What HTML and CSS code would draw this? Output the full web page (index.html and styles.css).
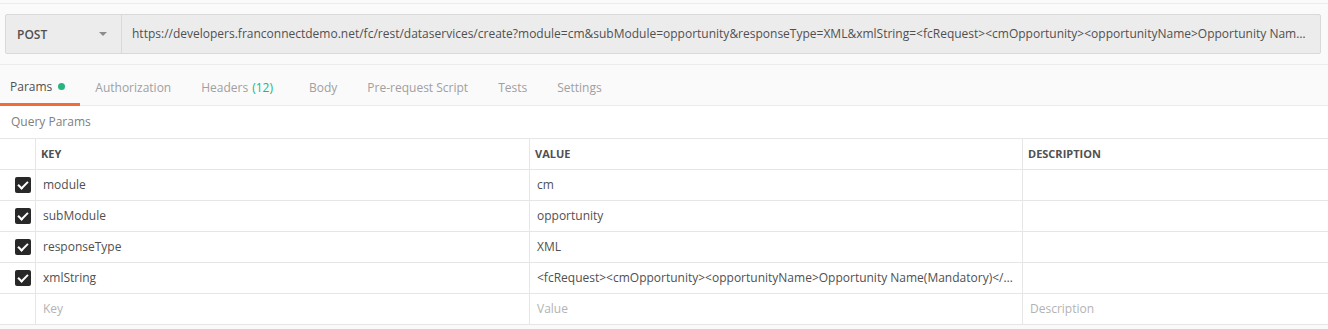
FILE: index.html
```html
<!DOCTYPE html>
<html lang="en">
<head>
  <meta charset="UTF-8" />
  <title>Request | Params</title>
  <meta name="viewport" content="width=device-width, initial-scale=1.0" />
  <link rel="stylesheet" href="styles.css">
</head>
<body>
  <!-- Barra de la petición -->
  <div class="request-bar">
    <div class="request-box">
      <div class="method">
        <span>POST</span>
        <span class="caret"></span>
      </div>
      <div class="url">https://developers.franconnectdemo.net/fc/rest/dataservices/create?module=cm&amp;subModule=opportunity&amp;responseType=XML&amp;xmlString=&lt;fcRequest&gt;&lt;cmOpportunity&gt;&lt;opportunityName&gt;Opportunity Name(Mandatory)&lt;/opportunityName&gt;&lt;/cmOpportunity&gt;&lt;/fcRequest&gt;</div>
    </div>
  </div>

  <!-- Pestañas -->
  <nav class="tabs">
    <a class="tab active">Params <span class="dot"></span></a>
    <a class="tab">Authorization</a>
    <a class="tab">Headers <span class="count">(12)</span></a>
    <a class="tab tab-body">Body</a>
    <a class="tab">Pre-request Script</a>
    <a class="tab">Tests</a>
    <a class="tab">Settings</a>
  </nav>

  <div class="params">
    <div class="params-title">Query Params</div>
    <div class="grid">
      <div class="row head">
        <div class="cell check"></div>
        <div class="cell key">KEY</div>
        <div class="cell value">VALUE</div>
        <div class="cell desc">DESCRIPTION</div>
      </div>
      <div class="row">
        <div class="cell check"><span class="box"></span></div>
        <div class="cell key">module</div>
        <div class="cell value">cm</div>
        <div class="cell desc"></div>
      </div>
      <div class="row">
        <div class="cell check"><span class="box"></span></div>
        <div class="cell key">subModule</div>
        <div class="cell value">opportunity</div>
        <div class="cell desc"></div>
      </div>
      <div class="row">
        <div class="cell check"><span class="box"></span></div>
        <div class="cell key">responseType</div>
        <div class="cell value">XML</div>
        <div class="cell desc"></div>
      </div>
      <div class="row">
        <div class="cell check"><span class="box"></span></div>
        <div class="cell key">xmlString</div>
        <div class="cell value">&lt;fcRequest&gt;&lt;cmOpportunity&gt;&lt;opportunityName&gt;Opportunity Name(Mandatory)&lt;/opportunityName&gt;</div>
        <div class="cell desc"></div>
      </div>
      <div class="row empty">
        <div class="cell check"></div>
        <div class="cell key">Key</div>
        <div class="cell value">Value</div>
        <div class="cell desc">Description</div>
      </div>
    </div>
  </div>
</body>
</html>
```

FILE: styles.css
```css
body {
  margin: 0;
  font-family: 'Open Sans', sans-serif;
  font-size: 12px;
  background: #fafafa;
  color: #505050;
}

.request-bar {
  margin-top: 3px;
  border-top: 1px solid #ececec;
  border-bottom: 1px solid #ececec;
  padding: 10px 7px 10px 5px;
}

.request-box {
  display: flex;
  height: 40px;
  box-sizing: border-box;
  border: 1px solid #d9d9d9;
  border-radius: 2px;
  background: #ececec;
}

.method {
  display: flex;
  align-items: center;
  justify-content: space-between;
  width: 116px;
  box-sizing: border-box;
  padding: 0 14px 0 11px;
  border-right: 1px solid #d9d9d9;
  font-weight: 600;
  color: #505050;
}

.caret {
  width: 0;
  height: 0;
  border-left: 4px solid transparent;
  border-right: 4px solid transparent;
  border-top: 4px solid #8c8c8c;
}

.url {
  flex: 1;
  padding: 0 14px 0 10px;
  line-height: 38px;
  white-space: nowrap;
  overflow: hidden;
  text-overflow: ellipsis;
  color: #505050;
}

.tabs {
  display: flex;
  height: 40px;
  border-bottom: 1px solid #ececec;
}

.tab {
  display: flex;
  align-items: center;
  padding: 5px 15px 0;
  color: #a0a0a0;
  border-bottom: 2px solid transparent;
  margin-bottom: -1px;
}

.tab:first-child {
  padding-left: 10px;
}

.tab.active {
  color: #505050;
  border-bottom: 3px solid #f26b3a;
}

.tab-body {
  margin-left: 6px;
}

.dot {
  display: inline-block;
  width: 7px;
  height: 7px;
  margin-left: 6px;
  border-radius: 50%;
  background: #26b47f;
}

.count {
  margin-left: 4px;
  color: #26b47f;
}

.params {
  background: #fff;
}

.params-title {
  height: 32px;
  line-height: 32px;
  padding-left: 11px;
  color: #808080;
}

.grid {
  border-top: 1px solid #e6e6e6;
}

.row {
  display: flex;
  height: 31px;
  box-sizing: border-box;
  border-bottom: 1px solid #e6e6e6;
}

.cell {
  box-sizing: border-box;
  padding: 0 7px;
  line-height: 30px;
  border-right: 1px solid #e6e6e6;
  white-space: nowrap;
  overflow: hidden;
  text-overflow: ellipsis;
}

.cell.check {
  display: flex;
  align-items: center;
  width: 36px;
  padding: 0 0 0 15px;
}

.cell.key {
  width: 494px;
}

.cell.value {
  width: 493px;
  padding-right: 8px;
}

.cell.desc {
  flex: 1;
  border-right: none;
}

.head .cell {
  padding: 0 5px;
  font-size: 11px;
  font-weight: 700;
  color: #505050;
}

.row.empty .cell {
  color: #b3b3b3;
}

.box {
  position: relative;
  width: 16px;
  height: 16px;
  border-radius: 2px;
  background: #282828;
}

.box::after {
  content: "";
  position: absolute;
  left: 5px;
  top: 2px;
  width: 4px;
  height: 8px;
  border: solid #fff;
  border-width: 0 2px 2px 0;
  transform: rotate(45deg);
}
```
